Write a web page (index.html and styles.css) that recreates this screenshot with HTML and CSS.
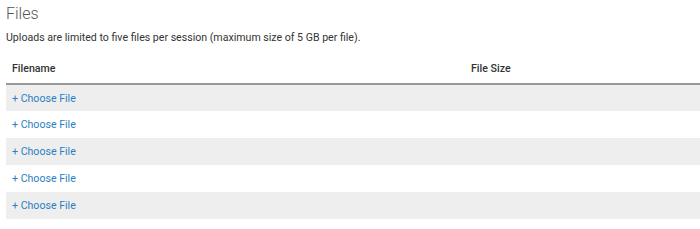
FILE: index.html
```html
<html>

<head>
    <link rel="stylesheet" href="styles.css">
</head>

<body>

    <div class="files">
        <h2 class="title">Files</h2>
        <p class="note">Uploads are limited to five files per session (maximum size of 5 GB per file).</p>

        <table class="file-table">
            <thead>
                <tr>
                    <th class="col-name">Filename</th>
                    <th class="col-size">File Size</th>
                </tr>
            </thead>
            <tbody>
                <tr><td><a href="#" class="choose">+ Choose File</a></td><td></td></tr>
                <tr><td><a href="#" class="choose">+ Choose File</a></td><td></td></tr>
                <tr><td><a href="#" class="choose">+ Choose File</a></td><td></td></tr>
                <tr><td><a href="#" class="choose">+ Choose File</a></td><td></td></tr>
                <tr><td><a href="#" class="choose">+ Choose File</a></td><td></td></tr>
            </tbody>
        </table>
    </div>

</body>

</html>
```

FILE: styles.css
```css
body {
    font-family: Roboto, "Liberation Sans", sans-serif;
    background-color: #fff;
    margin: 0;
    color: #333;
}

.files {
    padding: 0 0 0 6px;
}

.title {
    font-size: 16px;
    font-weight: 300;
    color: #555;
    margin: 0;
    padding-top: 4px;
    line-height: 20px;
}

.note {
    font-size: 10.6px;
    margin: 7px 0 0 0;
    line-height: 14px;
    color: #333;
}

.file-table {
    width: 100%;
    border-collapse: collapse;
    margin-top: 11px;
    font-size: 10.6px;
}

.file-table th {
    text-align: left;
    font-weight: 500;
    color: #333;
    padding: 6px 6px 8px 6px;
    border-bottom: 2px solid #999;
}

.col-name {
    width: 447px;
}

.file-table td {
    height: 27px;
    padding: 0 6px;
}

.file-table tbody tr:nth-child(odd) {
    background-color: #eee;
}

.choose {
    color: #2a7fc3;
    text-decoration: none;
}
```
